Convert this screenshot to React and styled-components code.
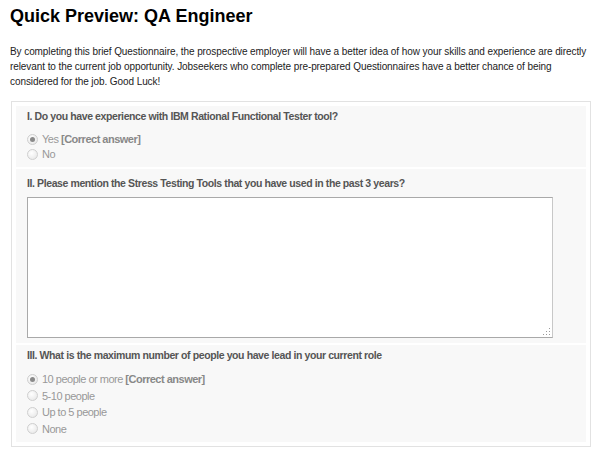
import styled, { createGlobalStyle } from "styled-components";

const GlobalStyle = createGlobalStyle`
  html, body {
    margin: 0;
    padding: 0;
    background: #ffffff;
  }
  body {
    font-family: "Liberation Sans", Arial, sans-serif;
  }
`;

const Page = styled.div`
  width: 600px;
  padding: 4px 0 0 10px;
  box-sizing: border-box;
`;

const Title = styled.h1`
  margin: 0;
  font-size: 18px;
  line-height: 24px;
  font-weight: bold;
  color: #000;
`;

const Intro = styled.p`
  margin: 16px 0 0 0;
  font-size: 10px;
  letter-spacing: -0.08px;
  line-height: 15px;
  color: #222;
  white-space: nowrap;
`;

const Preview = styled.div`
  margin: 12px 0 0 1px;
  width: 580px;
  box-sizing: border-box;
  border: 1px solid #e2e2e2;
  padding: 4px;
  display: flex;
  flex-direction: column;
  gap: 2px;
`;

const Question = styled.div`
  background: #f8f8f8;
  padding: ${(p) => p.$pad || "3px 11px 5px 11px"};
`;

const Prompt = styled.div`
  font-size: 10.5px;
  letter-spacing: -0.4px;
  line-height: 14px;
  font-weight: bold;
  color: #555;
  margin-bottom: ${(p) => p.$gap || "9px"};
`;

const Options = styled.div`
  display: flex;
  flex-direction: column;
`;

const Option = styled.div`
  display: flex;
  align-items: center;
  gap: 4px;
  font-size: 11px;
  letter-spacing: -0.5px;
  line-height: ${(p) => p.$lh || "15px"};
  color: #999;

  b {
    color: #888;
  }
`;

const Radio = styled.span`
  width: 11px;
  height: 11px;
  box-sizing: border-box;
  border-radius: 50%;
  border: 1px solid #cfcfcf;
  background: radial-gradient(circle at 40% 35%, #ffffff 0%, #ececec 70%, #dcdcdc 100%);
  position: relative;
  flex: none;

  &::after {
    content: "";
    display: ${(p) => (p.$checked ? "block" : "none")};
    position: absolute;
    left: 2px;
    top: 2px;
    width: 5px;
    height: 5px;
    border-radius: 50%;
    background: #8a8a8a;
  }
`;

const Answer = styled.div`
  width: 526px;
  height: 141px;
  box-sizing: border-box;
  border: 1px solid #a9a9a9;
  border-right-color: #c8c8c8;
  background: #fff;
  position: relative;
`;

const Grip = styled.svg`
  position: absolute;
  right: 1px;
  bottom: 1px;
`;

const questions = [
  {
    text: "I. Do you have experience with IBM Rational Functional Tester tool?",
    options: [
      { label: "Yes", correct: true },
      { label: "No" },
    ],
  },
];

const leadOptions = [
  { label: "10 people or more", correct: true },
  { label: "5-10 people" },
  { label: "Up to 5 people" },
  { label: "None" },
];

const Choice = ({ label, correct, lh }) => (
  <Option $lh={lh}>
    <Radio $checked={correct} />
    <span>
      {label}
      {correct && <b> [Correct answer]</b>}
    </span>
  </Option>
);

export default function App() {
  return (
    <>
      <GlobalStyle />
      <Page>
        <Title>Quick Preview: QA Engineer</Title>
        <Intro>
          By completing this brief Questionnaire, the prospective employer will have a better idea
          of how your skills and experience are directly
          <br />
          relevant to the current job opportunity. Jobseekers who complete pre-prepared
          Questionnaires have a better chance of being
          <br />
          considered for the job. Good Luck!
        </Intro>
        <Preview>
          {questions.map((q) => (
            <Question key={q.text}>
              <Prompt>{q.text}</Prompt>
              <Options>
                {q.options.map((o) => (
                  <Choice key={o.label} {...o} />
                ))}
              </Options>
            </Question>
          ))}
          <Question $pad="7px 11px 5px 11px">
            <Prompt $gap="7px">II. Please mention the Stress Testing Tools that you have used in the past 3 years?</Prompt>
            <Answer>
              <Grip width="9" height="9" viewBox="0 0 9 9">
                <g fill="#9a9a9a">
                  <rect x="7" y="1" width="1" height="1" />
                  <rect x="4" y="4" width="1" height="1" />
                  <rect x="7" y="4" width="1" height="1" />
                  <rect x="1" y="7" width="1" height="1" />
                  <rect x="4" y="7" width="1" height="1" />
                  <rect x="7" y="7" width="1" height="1" />
                </g>
              </Grip>
            </Answer>
          </Question>
          <Question $pad="3px 11px 5px 11px">
            <Prompt $gap="9px">III. What is the maximum number of people you have lead in your current role</Prompt>
            <Options>
              {leadOptions.map((o) => (
                <Choice key={o.label} {...o} lh="16.5px" />
              ))}
            </Options>
          </Question>
        </Preview>
      </Page>
    </>
  );
}
